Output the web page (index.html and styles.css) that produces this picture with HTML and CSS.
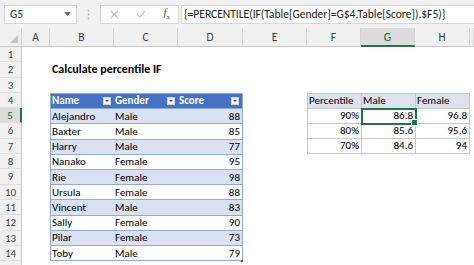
FILE: index.html
```html
<!DOCTYPE html>
<html lang="en">
<head>
    <meta charset="UTF-8">
    <meta name="viewport" content="width=device-width, initial-scale=1.0">
    <title>Calculate percentile IF</title>
    <link rel="stylesheet" href="styles.css">
</head>
<body>
    <div class="formulaBar">
        <div class="nameBox">
            <span>G5</span>
            <svg width="7" height="4" viewBox="0 0 7 4"><polygon points="0,0 7,0 3.5,4" fill="#6b6b6b"/></svg>
        </div>
        <svg class="grip" width="3" height="11" viewBox="0 0 3 11">
            <circle cx="1.5" cy="1.5" r="0.9" fill="#b5b5b5"/>
            <circle cx="1.5" cy="5.5" r="0.9" fill="#b5b5b5"/>
            <circle cx="1.5" cy="9.5" r="0.9" fill="#b5b5b5"/>
        </svg>
        <div class="fxBox">
            <svg width="9" height="9" viewBox="0 0 9 9"><path d="M1 1L8 8M8 1L1 8" stroke="#bcbcbc" stroke-width="1.1"/></svg>
            <svg width="10" height="8" viewBox="0 0 10 8"><path d="M1 4.3L3.8 7L9 1" stroke="#bcbcbc" stroke-width="1.1" fill="none"/></svg>
            <span class="fx"><i>f</i><sub>x</sub></span>
        </div>
        <div class="formula">{=PERCENTILE(IF(Table[Gender]=G$4,Table[Score]),$F5)}</div>
    </div>

    <div class="sheet">
        <div class="corner">
            <svg width="8" height="8" viewBox="0 0 8 8"><polygon points="8,0 8,8 0,8" fill="#c4c4c4"/></svg>
        </div>
        <div class="colHead">A</div>
        <div class="colHead">B</div>
        <div class="colHead">C</div>
        <div class="colHead">D</div>
        <div class="colHead">E</div>
        <div class="colHead">F</div>
        <div class="colHead active">G</div>
        <div class="colHead">H</div>
        <div class="colHead"></div>

        <div class="rowHead">1</div>
        <div class="rowHead">2</div>
        <div class="rowHead">3</div>
        <div class="rowHead">4</div>
        <div class="rowHead active">5</div>
        <div class="rowHead">6</div>
        <div class="rowHead">7</div>
        <div class="rowHead">8</div>
        <div class="rowHead">9</div>
        <div class="rowHead">10</div>
        <div class="rowHead">11</div>
        <div class="rowHead">12</div>
        <div class="rowHead">13</div>
        <div class="rowHead">14</div>
        <div class="rowHead"></div>

        <div class="title">Calculate percentile IF</div>

        <div class="scoreTable">
            <div class="tr head">
                <div class="th">Name <span class="dd"></span></div>
                <div class="th">Gender <span class="dd"></span></div>
                <div class="th">Score <span class="dd"></span></div>
            </div>
            <div class="tr"><div>Alejandro</div><div>Male</div><div class="num">88</div></div>
            <div class="tr"><div>Baxter</div><div>Male</div><div class="num">85</div></div>
            <div class="tr"><div>Harry</div><div>Male</div><div class="num">77</div></div>
            <div class="tr"><div>Nanako</div><div>Female</div><div class="num">95</div></div>
            <div class="tr"><div>Rie</div><div>Female</div><div class="num">98</div></div>
            <div class="tr"><div>Ursula</div><div>Female</div><div class="num">88</div></div>
            <div class="tr"><div>Vincent</div><div>Male</div><div class="num">83</div></div>
            <div class="tr"><div>Sally</div><div>Female</div><div class="num">90</div></div>
            <div class="tr"><div>Pilar</div><div>Female</div><div class="num">73</div></div>
            <div class="tr"><div>Toby</div><div>Male</div><div class="num last">79</div></div>
        </div>

        <div class="pctTable">
            <div class="hd">Percentile</div>
            <div class="hd">Male</div>
            <div class="hd">Female</div>
            <div class="num">90%</div>
            <div class="num selected">86.8</div>
            <div class="num">96.8</div>
            <div class="num">80%</div>
            <div class="num">85.6</div>
            <div class="num">95.6</div>
            <div class="num">70%</div>
            <div class="num">84.6</div>
            <div class="num">94</div>
        </div>
    </div>
</body>
</html>
```

FILE: styles.css
```css
*{
    box-sizing: border-box;
}
body{
    margin: 0;
    overflow: hidden;
    background: #fff;
    color: #000;
    font-family: Calibri, Carlito, Lato, sans-serif;
    font-size: 11px;
}

/* formula bar */
.formulaBar{
    display: flex;
    align-items: center;
    height: 28px;
    padding: 0 0 0 4px;
    background: #f1f1f1;
    font-size: 11.5px;
}
.nameBox{
    display: flex;
    align-items: center;
    justify-content: space-between;
    width: 73px;
    height: 19px;
    padding: 0 5px 0 5px;
    background: #fff;
    border: 1px solid #d6d6d6;
    color: #333;
}
.grip{
    margin: 0 10px 0 10px;
}
.fxBox{
    display: flex;
    align-items: center;
    justify-content: space-between;
    width: 79px;
    height: 19px;
    padding: 0 8px 0 9px;
    background: #fff;
    border: 1px solid #d6d6d6;
}
.fx{
    font-family: "Liberation Serif", serif;
    font-size: 11px;
    color: #444;
}
.fx sub{
    font-size: 7px;
}
.formula{
    flex: 1;
    height: 19px;
    margin-left: 2px;
    padding-left: 2px;
    line-height: 17px;
    background: #fff;
    border: 1px solid #d6d6d6;
    border-right: none;
    color: #222;
    white-space: nowrap;
    overflow: hidden;
}

/* grid */
.sheet{
    display: grid;
    grid-template-columns: 22px 28px 64px 64px 65px 64px 54px 54px 55px 1fr;
    grid-template-rows: 19px repeat(15, 15.3px);
}
.corner{
    display: flex;
    align-items: flex-end;
    justify-content: flex-end;
    padding: 0 3px 3px 0;
    background: #f1f1f1;
    border-right: 1px solid #d4d4d4;
    border-bottom: 1px solid #c9c9c9;
}
.colHead{
    text-align: center;
    line-height: 18px;
    font-size: 11.5px;
    background: #f1f1f1;
    border-right: 1px solid #d4d4d4;
    border-bottom: 1px solid #c9c9c9;
    color: #444;
}
.colHead.active{
    background: #dcdcdc;
    border-bottom: 2px solid #217346;
    color: #1e5e3a;
}
.rowHead{
    grid-column: 1;
    text-align: center;
    line-height: 15px;
    background: #f1f1f1;
    border-right: 1px solid #c9c9c9;
    border-bottom: 1px solid #dedede;
    color: #444;
}
.rowHead.active{
    background: #dcdcdc;
    border-right: 2px solid #217346;
    color: #1e5e3a;
}

.title{
    grid-row: 3;
    grid-column: 3 / 7;
    padding-left: 2px;
    line-height: 15px;
    font-size: 12px;
    font-weight: bold;
    white-space: nowrap;
}

/* left table */
.scoreTable{
    grid-row: 5 / 16;
    grid-column: 3 / 6;
    display: flex;
    flex-direction: column;
    border: 1px solid #8ea9db;
}
.tr{
    flex: 1;
    display: grid;
    grid-template-columns: 63px 64px 1fr;
    align-items: center;
    border-bottom: 1px solid #8ea9db;
}
.tr:last-child{
    border-bottom: none;
}
.tr:nth-child(even){
    background: #d9e1f2;
}
.tr div{
    padding: 0 2px 0 1px;
    line-height: 13px;
}
.tr .num{
    text-align: right;
}
.tr .last{
    position: relative;
}
.tr .last::after{
    content: "";
    position: absolute;
    right: -1px;
    bottom: -2px;
    border-left: 3px solid transparent;
    border-bottom: 3px solid #3a5a9a;
}
.tr.head{
    background: #4472c4;
    color: #fff;
    font-weight: bold;
}
.th{
    display: flex;
    align-items: center;
    justify-content: space-between;
}
.dd{
    display: flex;
    align-items: center;
    justify-content: center;
    width: 8px;
    height: 8px;
    margin-right: 1px;
    background: #f2f2f2;
    border: 1px solid #cfcfcf;
}
.dd::after{
    content: "";
    border-left: 2px solid transparent;
    border-right: 2px solid transparent;
    border-top: 2px solid #555;
}

/* right table */
.pctTable{
    grid-row: 5 / 9;
    grid-column: 7 / 10;
    display: grid;
    grid-template-columns: 54px 54px 1fr;
    grid-auto-rows: 1fr;
    border-top: 1px solid #c6c6c6;
    border-left: 1px solid #c6c6c6;
}
.pctTable div{
    padding: 0 2px 0 1px;
    line-height: 14px;
    border-right: 1px solid #c6c6c6;
    border-bottom: 1px solid #c6c6c6;
}
.pctTable .hd{
    background: #dce3ef;
}
.pctTable .num{
    text-align: right;
}
.pctTable .selected{
    position: relative;
    outline: 2px solid #217346;
    outline-offset: -1px;
}
.pctTable .selected::after{
    content: "";
    position: absolute;
    right: -3px;
    bottom: -3px;
    width: 5px;
    height: 5px;
    background: #217346;
    border: 1px solid #fff;
}
```
